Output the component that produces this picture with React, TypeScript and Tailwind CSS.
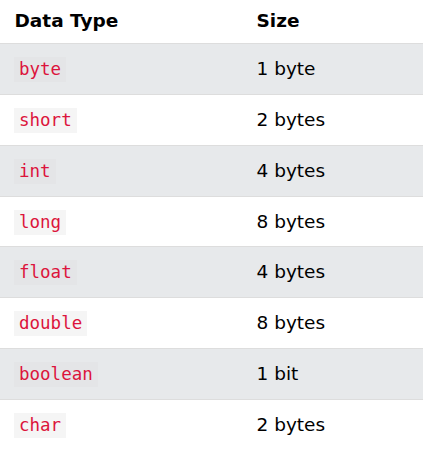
const rows = [
  { type: 'byte', size: '1 byte' },
  { type: 'short', size: '2 bytes' },
  { type: 'int', size: '4 bytes' },
  { type: 'long', size: '8 bytes' },
  { type: 'float', size: '4 bytes' },
  { type: 'double', size: '8 bytes' },
  { type: 'boolean', size: '1 bit' },
  { type: 'char', size: '2 bytes' },
]

export default function App() {
  return (
    <div className="w-[423px] bg-white text-black font-['DejaVu_Sans',Verdana,sans-serif] text-[18.5px]">
      <div className="grid grid-cols-[242px_1fr] h-[44px] items-center border-b border-[#dddddd] font-bold">
        <div className="pl-[14.5px] -mt-[1px]">Data Type</div>
        <div className="pl-[14.5px] -mt-[1px]">Size</div>
      </div>
      {rows.map((r, i) => (
        <div
          key={r.type}
          className={
            'grid grid-cols-[242px_1fr] h-[50.86px] items-center border-b border-[#dddddd] ' +
            (i % 2 === 0 ? 'bg-[#e7e9eb]' : 'bg-white')
          }
        >
          <div className="pl-[14px]">
            <code className="inline-block px-[5px] py-[2px] leading-[21px] text-[17.5px] text-[crimson] bg-[rgba(222,222,222,0.3)] font-['DejaVu_Sans_Mono',Consolas,monospace]">
              {r.type}
            </code>
          </div>
          <div className="pl-[14.5px]">{r.size}</div>
        </div>
      ))}
    </div>
  )
}
